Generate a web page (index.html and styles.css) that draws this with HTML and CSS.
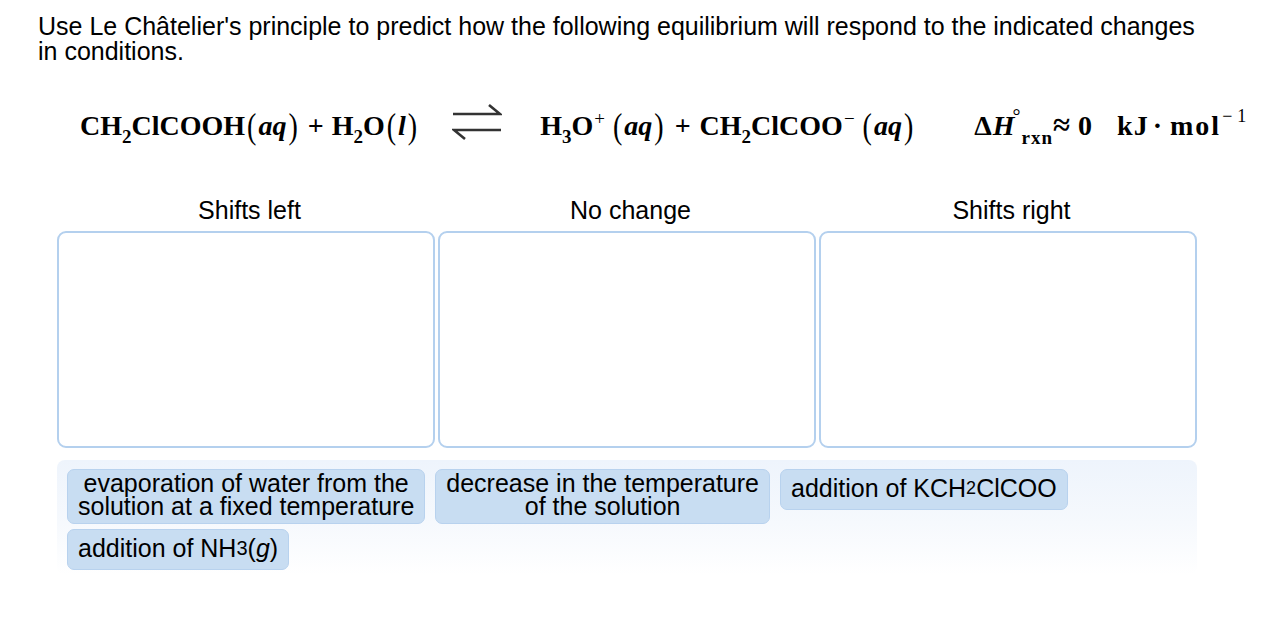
FILE: index.html
```html
<!DOCTYPE html>
<html>
<head>
<meta charset="utf-8">
<link rel="stylesheet" href="styles.css">
</head>
<body>
<div class="page">
  <p class="prompt">Use Le Châtelier's principle to predict how the following equilibrium will respond to the indicated changes in conditions.</p>

  <div class="eq"><span class="side left">CH<sub>2</sub>ClCOOH<span class="pr">(</span><i>aq</i><span class="pr">)</span><span class="op">+</span>H<sub>2</sub>O<span class="pr">(</span><i>l</i><span class="pr">)</span></span><svg class="arrow" width="50" height="40" viewBox="0 0 50 40"><path d="M1 11 H48 L37 2" fill="none" stroke="#333" stroke-width="2.6"/><path d="M49 27 H2 L13 36" fill="none" stroke="#333" stroke-width="2.6"/></svg><span class="side mid">H<sub>3</sub>O<sup>+</sup><span class="pr">(</span><i>aq</i><span class="pr">)</span><span class="op">+</span>CH<sub>2</sub>ClCOO<sup>−</sup><span class="pr">(</span><i>aq</i><span class="pr">)</span></span><span class="side right">Δ<i>H</i><span class="scr"><span class="deg">°</span><span class="rxn">rxn</span></span><span class="approx">≈</span><span class="zero">0</span><span class="unit">kJ</span><span class="dot">·</span><span class="mol">mol</span><sup class="exp">−1</sup></span></div>

  <div class="board">
    <div class="col">
      <div class="label">Shifts left</div>
      <div class="bin"></div>
    </div>
    <div class="col">
      <div class="label">No change</div>
      <div class="bin"></div>
    </div>
    <div class="col">
      <div class="label">Shifts right</div>
      <div class="bin"></div>
    </div>
  </div>

  <div class="tray">
    <div class="card">evaporation of water from the<br>solution at a fixed temperature</div>
    <div class="card">decrease in the temperature<br>of the solution</div>
    <div class="card">addition of KCH<sub>2</sub>ClCOO</div>
    <div class="card">addition of NH<span class="sub3">3</span>(<i>g</i>)</div>
  </div>
</div>
</body>
</html>
```

FILE: styles.css
```css
* { box-sizing: border-box; }
html, body { margin: 0; padding: 0; background: #fff; }
body { font-family: "Liberation Sans", Arial, sans-serif; color: #000; }

.page { padding: 14px 0 0 38px; width: 1266px; }

.prompt {
  margin: 0;
  width: 1168px;
  font-size: 25px;
  line-height: 25px;
}

/* equation line */
.eq {
  margin-top: 31px;
  padding-left: 42px;
  height: 60px;
  line-height: 60px;
  font-family: "Liberation Serif", "Times New Roman", serif;
  font-weight: bold;
  font-size: 28px;
  white-space: nowrap;
}
.eq i { font-style: italic; }
.eq sub { font-size: 19px; vertical-align: -8px; line-height: 0; }
.eq sup { font-size: 19px; vertical-align: 10px; line-height: 0; font-weight: normal; margin: 0 6px 0 1px; }
.pr { display: inline-block; transform: scaleY(1.3); font-weight: normal; margin: 0 2px; }
.op { margin: 0 8px; }
.mid .op { margin: 0 9px; }
.arrow { vertical-align: -8px; margin-left: 33px; margin-right: 38px; }
.right { margin-left: 59px; letter-spacing: 1px; }
.scr {
  display: inline-block;
  vertical-align: -9px;
  margin-left: 6px;
}
.deg {
  display: block;
  height: 10px;
  line-height: 10px;
  font-size: 20px;
  font-weight: normal;
  margin: 0 0 9px -9px;
}
.rxn { display: block; font-size: 19px; line-height: 16px; }
.approx { font-size: 31px; }
.zero { margin-left: 7px; }
.unit { margin-left: 24px; }
.dot { margin-left: 4px; }
.mol { margin-left: 7px; letter-spacing: 2px; }
.eq .exp { margin: 0 0 0 1px; letter-spacing: 5px; font-size: 18px; vertical-align: 13px; }

/* drop zones */
.board {
  display: flex;
  gap: 3px;
  margin-top: 42px;
  margin-left: 19px;
}
.col { width: 378px; display: flex; flex-direction: column; }
.label {
  text-align: center;
  padding-left: 7px;
  font-size: 25px;
  line-height: 26px;
  height: 34px;
}
.bin {
  height: 217px;
  border: 2px solid #b4d0ee;
  border-radius: 9px;
  background: #fff;
}

/* answer tray */
.tray {
  margin-top: 12px;
  margin-left: 19px;
  width: 1140px;
  height: 115px;
  padding: 9px 10px;
  border-radius: 8px;
  background: linear-gradient(to bottom, #eef4fc 0%, #f6f9fd 55%, #ffffff 100%);
  display: flex;
  flex-wrap: wrap;
  align-content: flex-start;
  align-items: flex-start;
  column-gap: 10px;
  row-gap: 5px;
}
.card {
  background: #c8ddf2;
  border: 1px solid #b8d2ee;
  border-radius: 7px;
  padding: 2px 10px 5px;
  min-height: 41px;
  display: flex;
  align-items: center;
  justify-content: center;
  text-align: center;
  font-size: 25px;
  line-height: 23px;
  white-space: nowrap;
}
.card sub { font-size: 18px; vertical-align: -5px; line-height: 0; }
.card .sub3 { font-size: 20px; vertical-align: -4px; line-height: 0; }
```
